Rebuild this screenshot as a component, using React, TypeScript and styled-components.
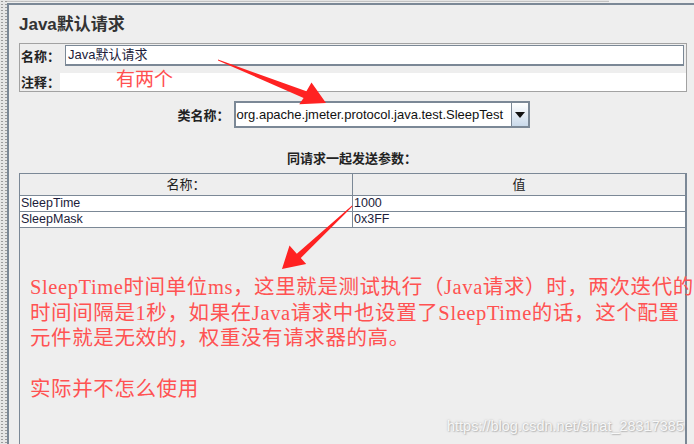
import { Fragment } from "react";
import { createGlobalStyle, styled } from "styled-components";

const GlobalStyle = createGlobalStyle`
  html, body {
    margin: 0;
    padding: 0;
    background: #eeeeee;
    overflow: hidden;
  }
  body {
    font-family: "Liberation Sans", "Noto Sans CJK SC", sans-serif;
    color: #222;
  }
`;

const Screen = styled.div`
  position: relative;
  display: flex;
  width: 694px;
  height: 444px;
  overflow: hidden;
  background: #eeeeee;
`;

const Gutter = styled.div`
  width: 7px;
  flex-shrink: 0;
  background-color: #e6e6e6;
  background-image: radial-gradient(circle, #9c9c9c 0.7px, transparent 0.9px);
  background-size: 4px 3px;
  background-position: 0 0;
`;

const Column = styled.div`
  flex: 1;
  display: flex;
  flex-direction: column;
  min-width: 0;
`;

const TopStrip = styled.div`
  height: 3px;
  background: linear-gradient(to bottom, #e4e4e4 0 1px, #c2c2c2 1px 2px, #eeeeee 2px 3px);
  background-size: 602px 3px;
  background-repeat: no-repeat;
`;

const Panel = styled.div`
  flex: 1;
  display: flex;
  flex-direction: column;
  border-top: 2px solid #7b8896;
  border-left: 2px solid #7b8896;
  padding: 10px 7px 0 10px;
  min-height: 0;
`;

const Title = styled.h1`
  margin: 0;
  font-size: 17px;
  line-height: 20px;
  font-weight: bold;
  color: #333;
`;

const NameBox = styled.div`
  margin-top: 8px;
  border: 1px solid #a2a2a2;
  display: flex;
  flex-direction: column;
  gap: 6px;
  padding-top: 1px;
`;

const FieldRow = styled.div<{ $label: number; $right?: number }>`
  display: grid;
  grid-template-columns: ${(p) => p.$label}px 1fr;
  align-items: center;
  padding-right: ${(p) => p.$right ?? 0}px;
`;

const Label = styled.span`
  font-size: 13px;
  font-weight: bold;
  padding-left: 1px;
  color: #222;
  white-space: nowrap;
`;

const TextField = styled.div`
  height: 21px;
  box-sizing: border-box;
  border: 1px solid #7b8896;
  border-bottom-width: 2px;
  background: #fff;
  font-size: 13px;
  line-height: 18px;
  padding-left: 2px;
  color: #1c1c3a;
`;

const CommentArea = styled.div`
  height: 18px;
  background: #fff;
`;

const ClassRow = styled.div`
  margin-top: 9px;
  display: flex;
  justify-content: center;
  align-items: center;
  gap: 4px;
`;

const Combo = styled.div`
  display: flex;
  height: 27px;
`;

const ComboText = styled.div`
  width: 277px;
  box-sizing: border-box;
  border: 2px solid #7b8896;
  border-right: none;
  background: #fff;
  font-size: 13px;
  line-height: 23px;
  padding-left: 1px;
  color: #111;
  white-space: nowrap;
  overflow: hidden;
`;

const ComboButton = styled.div`
  width: 19px;
  box-sizing: border-box;
  border: 2px solid #7b8896;
  border-left: 1px solid #7b8896;
  background: linear-gradient(to bottom, #ffffff, #c9d9ea);
  display: flex;
  align-items: center;
  justify-content: center;
`;

const SectionLabel = styled.div`
  margin-top: 23px;
  text-align: center;
  font-size: 13px;
  line-height: 16px;
  font-weight: bold;
  color: #222;
  padding-right: 2px;
`;

const ArgsTable = styled.div`
  margin-top: 6px;
  flex: 1;
  border: 1px solid #7b8896;
  border-right-width: 2px;
  border-bottom: none;
  display: flex;
  flex-direction: column;
`;

const Grid = styled.div`
  display: grid;
  grid-template-columns: 333px 1fr;
`;

const HeadCell = styled.div<{ $last?: boolean }>`
  height: 21px;
  border-bottom: 1px solid #7b8896;
  border-right: ${(p) => (p.$last ? "none" : "1px solid #7b8896")};
  background: #eeeeee;
  font-size: 13px;
  line-height: 21px;
  text-align: center;
  color: #222;
`;

const Cell = styled.div<{ $last?: boolean }>`
  height: 15px;
  border-bottom: 1px solid #7b8896;
  border-right: ${(p) => (p.$last ? "none" : "1px solid #7b8896")};
  background: #fff;
  font-size: 12.5px;
  line-height: 15px;
  padding-left: 1px;
  color: #1c1c3a;
`;

const Overlay = styled.svg`
  position: absolute;
  inset: 0;
  pointer-events: none;
`;

const Note = styled.div<{ $x: number; $y: number }>`
  position: absolute;
  left: ${(p) => p.$x}px;
  top: ${(p) => p.$y}px;
  color: #ff4646;
  white-space: nowrap;
  pointer-events: none;
`;

const ShortNote = styled(Note)`
  font-family: "Noto Sans CJK SC", sans-serif;
  font-size: 19px;
  line-height: 22px;
  color: #ff5050;
`;

const LongNote = styled(Note)`
  font-family: "Liberation Serif", "Noto Sans CJK SC", serif;
  font-size: 20.5px;
  line-height: 25.6px;
  letter-spacing: 0.6px;
  color: #ff5252;
`;

const Watermark = styled.div`
  position: absolute;
  right: 10px;
  bottom: 10px;
  font-family: "Liberation Sans", sans-serif;
  font-size: 14.5px;
  color: rgba(255, 255, 255, 0.9);
  text-shadow: 0 0 2px rgba(130, 130, 130, 0.6), 1px 1px 1px rgba(160, 160, 160, 0.5);
  pointer-events: none;
`;

const params = [
  { name: "SleepTime", value: "1000" },
  { name: "SleepMask", value: "0x3FF" },
];

const noteLines = [
  "SleepTime时间单位ms，这里就是测试执行（Java请求）时，两次迭代的",
  "时间间隔是1秒，如果在Java请求中也设置了SleepTime的话，这个配置",
  "元件就是无效的，权重没有请求器的高。",
  "\u00a0",
  "实际并不怎么使用",
];

export default function App() {
  return (
    <>
      <GlobalStyle />
      <Screen>
        <Gutter />
        <Column>
          <TopStrip />
          <Panel>
            <Title>Java默认请求</Title>

            <NameBox>
              <FieldRow $label={45} $right={2}>
                <Label>名称：</Label>
                <TextField>Java默认请求</TextField>
              </FieldRow>
              <FieldRow $label={40}>
                <Label>注释：</Label>
                <CommentArea />
              </FieldRow>
            </NameBox>

            <ClassRow>
              <Label>类名称：</Label>
              <Combo>
                <ComboText>org.apache.jmeter.protocol.java.test.SleepTest</ComboText>
                <ComboButton>
                  <svg width="10" height="6" viewBox="0 0 10 6">
                    <path d="M0 0h10L5 6z" fill="#111" />
                  </svg>
                </ComboButton>
              </Combo>
            </ClassRow>

            <SectionLabel>同请求一起发送参数：</SectionLabel>

            <ArgsTable>
              <Grid>
                <HeadCell>名称：</HeadCell>
                <HeadCell $last>值</HeadCell>
                {params.map((p) => (
                  <Fragment key={p.name}>
                    <Cell>{p.name}</Cell>
                    <Cell $last>{p.value}</Cell>
                  </Fragment>
                ))}
              </Grid>
            </ArgsTable>
          </Panel>
        </Column>

        <Overlay width="694" height="444" viewBox="0 0 694 444">
          {/* arrow towards the class name combo */}
          <polygon
            points="218,59.6 218,60.4 303.6,97.9 299.2,104.2 326,103 311.5,82.6 306.4,91.2"
            fill="#f22"
          />
          {/* arrow from the value column down to the note */}
          <polygon
            points="352,205.6 352.4,206.4 300.8,258 306.2,263.9 282,269 289.5,245.5 296.8,253.7"
            fill="#f22"
          />
        </Overlay>

        <ShortNote $x={116} $y={67}>有两个</ShortNote>

        <LongNote $x={30} $y={275}>
          {noteLines.map((l, i) => (
            <div key={i}>{l}</div>
          ))}
        </LongNote>

        <Watermark>https://blog.csdn.net/sinat_28317385</Watermark>
      </Screen>
    </>
  );
}
